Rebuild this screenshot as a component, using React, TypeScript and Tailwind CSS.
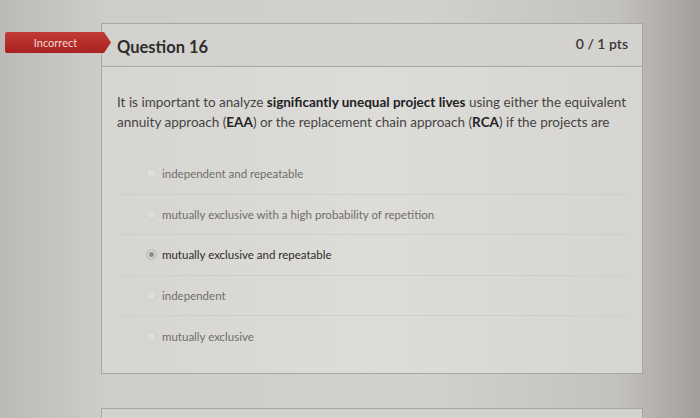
import React from 'react';

const options = [
    { label: 'independent and repeatable', selected: false },
    { label: 'mutually exclusive with a high probability of repetition', selected: false },
    { label: 'mutually exclusive and repeatable', selected: true },
    { label: 'independent', selected: false },
    { label: 'mutually exclusive', selected: false },
];

const Radio = ({ checked }: { checked: boolean }) => (
    <span className={`w-[11px] h-[11px] rounded-full border flex items-center justify-center shrink-0 ${checked ? 'border-[#b9b7b4] bg-[#d6d4d1]' : 'border-[#cfcdca] bg-[#dedcd9]'}`}>
        {checked && <span className="w-[5px] h-[5px] rounded-full bg-[#8f8d8a]" />}
    </span>
);

export default function App() {
    return (
        <div className="w-[700px] h-[418px] overflow-hidden font-['Lato','Open_Sans',sans-serif] bg-[linear-gradient(90deg,#bcbab6_0%,#cfcdca_15%,#d3d1ce_60%,#c4c2bf_88%,#a19e9b_100%)]">
            <div className="flex pt-[23px]">
                <div className="w-[101px] shrink-0 pl-[5px] pt-[9px]">
                    <div className="h-[21px] w-[106px] rounded-l-[2px] bg-[linear-gradient(180deg,#c23a36,#a8231f)] [clip-path:polygon(0_0,calc(100%-7px)_0,100%_50%,calc(100%-7px)_100%,0_100%)] flex items-center justify-center pr-[5px]">
                        <span className="text-[11px] text-[#f1d6d4] leading-none">Incorrect</span>
                    </div>
                </div>
                <div className="w-[542px] shrink-0">
                    <div className="border border-[#a9a7a4] bg-[#d9d8d5]">
                        <div className="h-[43px] flex items-center justify-between pl-[15px] pr-[14px] bg-[#d3d2cf] border-b border-[#a9a7a4]">
                            <h2 className="text-[16.5px] font-bold text-[#2d2c2b] mt-[4px]">Question 16</h2>
                            <span className="text-[14px] font-semibold text-[#3a3938] -mt-[3px]">0 / 1 pts</span>
                        </div>
                        <div className="pl-[15px] pr-[10px] pt-[25px] pb-[16px] bg-[linear-gradient(90deg,#d6d5d2,#dddcd9_50%,#d6d5d2)]">
                            <p className="text-[13.5px] leading-[20px] text-[#454443]">
                                It is important to analyze <b className="font-bold text-[#222]">significantly unequal project lives</b> using either the equivalent annuity approach (<b className="font-bold text-[#222]">EAA</b>) or the replacement chain approach (<b className="font-bold text-[#222]">RCA</b>) if the projects are
                            </p>
                            <div className="mt-[22px] pl-[2px] pr-[4px]">
                                {options.map((o, i) => (
                                    <div
                                        key={i}
                                        className={`h-[40.5px] flex items-center gap-[5px] pl-[27px] ${i < options.length - 1 ? 'border-b border-[#cfcecb]' : ''}`}
                                    >
                                        <Radio checked={o.selected} />
                                        <span className={`text-[11.5px] ${o.selected ? 'text-[#2e2d2c]' : 'text-[#6f6e6c]'}`}>{o.label}</span>
                                    </div>
                                ))}
                            </div>
                        </div>
                    </div>
                    <div className="mt-[34px] h-[20px] border border-[#a9a7a4] bg-[#d3d2cf]" />
                </div>
            </div>
        </div>
    );
}
